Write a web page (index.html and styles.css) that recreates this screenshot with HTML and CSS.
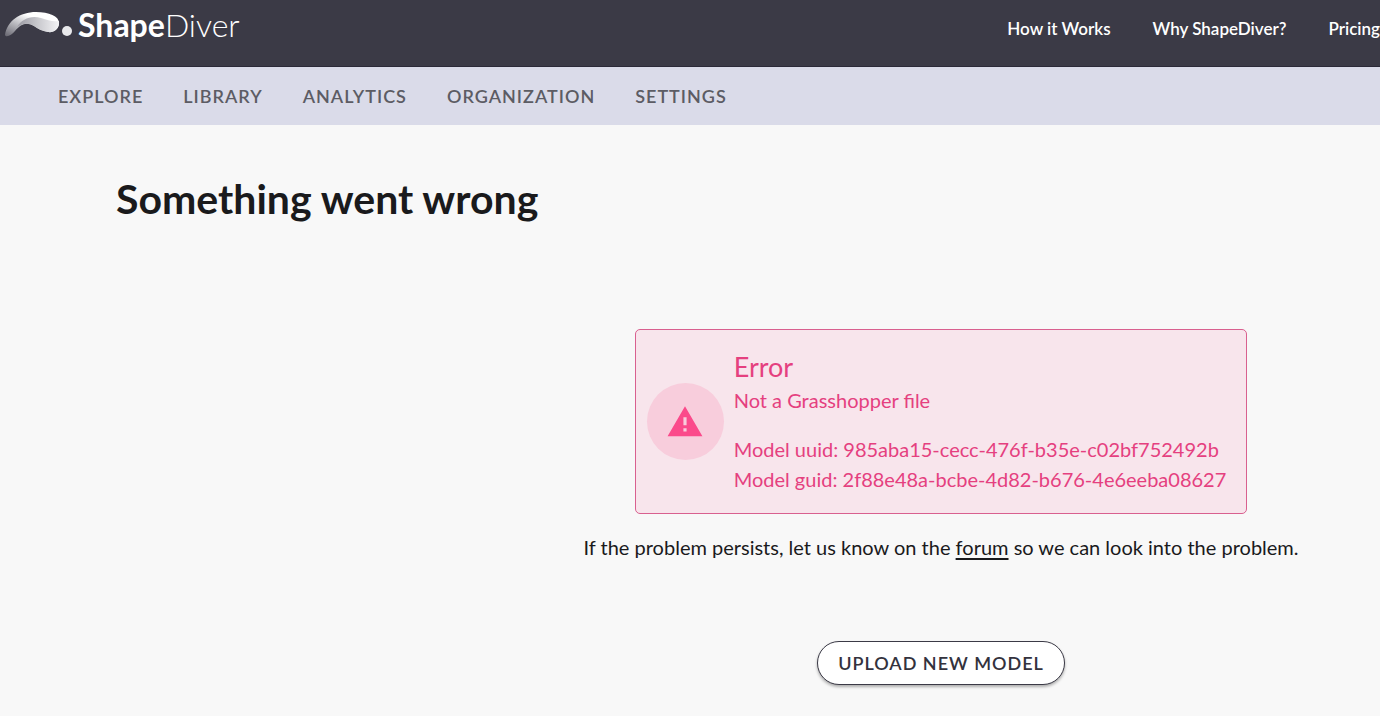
FILE: index.html
```html
<!DOCTYPE html>
<html lang="en">
<head>
  <meta charset="UTF-8">
  <meta name="viewport" content="width=device-width, initial-scale=1.0">
  <title>ShapeDiver</title>
  <link rel="stylesheet" href="styles.css">
</head>
<body>
  <header class="topbar">
    <a class="logo" href="#">
      <svg class="logo-mark" viewBox="0 0 68 32" aria-hidden="true">
        <defs>
          <linearGradient id="swoosh" x1="0" y1="1" x2="1" y2="0">
            <stop offset="0" stop-color="#66656f"/>
            <stop offset="0.4" stop-color="#c4c4c9"/>
            <stop offset="0.65" stop-color="#ffffff"/>
            <stop offset="1" stop-color="#ffffff"/>
          </linearGradient>
          <linearGradient id="fold" x1="0" y1="0" x2="1" y2="0">
            <stop offset="0" stop-color="#9a99a2"/>
            <stop offset="0.5" stop-color="#c9c9ce"/>
            <stop offset="1" stop-color="#f4f4f6"/>
          </linearGradient>
        </defs>
        <path fill="url(#swoosh)" d="M1 27C3 13 16 4 32 4c13 0 23 4 23 11 0 6-5 10-11 9-6-1-10-3-14-6-8-5-14-1-19 5-3 4-9 7-10 4z"/>
        <path fill="url(#fold)" d="M13 19c5-8 14-12 24-9 7 2 11 4 18 3 1 7-5 12-11 11-6-1-10-3-14-6-7-4-12-2-17 1z"/>
        <circle cx="63" cy="23" r="5" fill="#e9e9ec"/>
      </svg>
      <span class="logo-text"><b>Shape</b>Diver</span>
    </a>
    <nav class="topnav">
      <a href="#">How it Works</a>
      <a href="#">Why ShapeDiver?</a>
      <a href="#">Pricing</a>
    </nav>
  </header>

  <nav class="subnav">
    <a href="#">EXPLORE</a>
    <a href="#">LIBRARY</a>
    <a href="#">ANALYTICS</a>
    <a href="#">ORGANIZATION</a>
    <a href="#">SETTINGS</a>
  </nav>

  <main>
    <h1>Something went wrong</h1>
    <section class="content">
      <div class="alert" role="alert">
        <span class="alert-icon">
          <svg viewBox="0 0 24 24" aria-hidden="true">
            <path d="M1 21h22L12 2 1 21zm12-3h-2v-2h2v2zm0-4h-2v-5h2v5z"/>
          </svg>
        </span>
        <div class="alert-text">
          <h2>Error</h2>
          <p>Not a Grasshopper file</p>
          <p class="ids">Model uuid: 985aba15-cecc-476f-b35e-c02bf752492b<br>Model guid: 2f88e48a-bcbe-4d82-b676-4e6eeba08627</p>
        </div>
      </div>
      <p class="help">If the problem persists, let us know on the <a href="#">forum</a> so we can look into the problem.</p>
      <button class="upload" type="button">UPLOAD NEW MODEL</button>
    </section>
  </main>
</body>
</html>
```

FILE: styles.css
```css
* {
  box-sizing: border-box;
}

body {
  margin: 0;
  background: #f8f8f8;
  color: #1a1a1c;
  font-family: Lato, "Liberation Sans", sans-serif;
  font-size: 20px;
  line-height: 30px;
}

a {
  color: inherit;
  text-decoration: none;
}

h1, h2, p {
  margin: 0;
}

.topbar {
  display: flex;
  justify-content: space-between;
  height: 67px;
  padding-left: 4px;
  border-bottom: 1px solid #2b2938;
  background: #3b3a46;
  color: #fff;
  overflow: hidden;
}

.logo {
  display: flex;
  gap: 6px;
  padding-top: 8px;
}

.logo-mark {
  width: 68px;
  height: 32px;
}

.logo-text {
  font-size: 32px;
  font-weight: 300;
  line-height: 34px;
}

.logo-text b {
  font-weight: 700;
}

.topnav {
  display: flex;
  gap: 42px;
  padding-top: 14px;
  font-size: 17px;
  font-weight: 600;
}

.subnav {
  display: flex;
  gap: 40px;
  padding: 14px 58px;
  background: #dadbe9;
  color: #5c5c64;
  font-size: 18px;
  font-weight: 600;
  letter-spacing: 1px;
}

main {
  padding: 48px 0 30px;
}

h1 {
  margin-left: 116px;
  font-size: 41px;
  line-height: 52px;
}

.content {
  display: flex;
  flex-direction: column;
  align-items: center;
  margin-left: 502px;
  padding-top: 104px;
}

.alert {
  display: flex;
  align-items: center;
  gap: 10px;
  padding: 19px 20px 19px 11px;
  border: 1px solid #d9608f;
  border-radius: 5px;
  background: #f8e5ec;
  color: #e5407f;
}

.alert-icon {
  display: flex;
  flex: none;
  align-items: center;
  justify-content: center;
  width: 77px;
  height: 77px;
  border-radius: 50%;
  background: #f8cddc;
}

.alert-icon svg {
  width: 38px;
  height: 38px;
  fill: #fb4a8b;
}

.alert h2 {
  font-size: 27px;
  font-weight: 400;
  line-height: 36px;
}

.ids {
  margin-top: 19px;
}

.help {
  margin-top: 18px;
}

.help a {
  text-decoration: underline;
  text-decoration-thickness: 2px;
  text-underline-offset: 3px;
}

.upload {
  margin-top: 79px;
  padding: 0 20px;
  height: 44px;
  border: 1px solid #3b3a46;
  border-radius: 22px;
  background: #fff;
  box-shadow: 0 2px 3px rgba(0, 0, 0, 0.3);
  color: #33323d;
  font-family: inherit;
  font-size: 18px;
  font-weight: 600;
  letter-spacing: 1px;
}
```
